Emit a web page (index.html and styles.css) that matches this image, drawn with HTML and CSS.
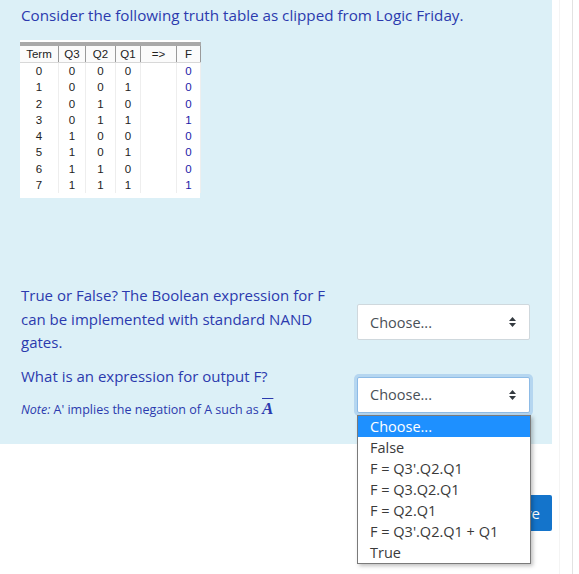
FILE: index.html
```html
<!DOCTYPE html>
<html>
<head>
    <meta charset="utf-8">
    <title>Question</title>
    <link rel="stylesheet" href="styles.css">
</head>
<body>
    <div class="page">
        <div class="main">
            <div class="formulation">
                <p class="intro">Consider the following truth table as clipped from Logic Friday.</p>
                <div class="clip">
                    <table class="tt">
                        <thead>
                            <tr>
                                <th class="c-term">Term</th>
                                <th class="c-q3">Q3</th>
                                <th class="c-q2">Q2</th>
                                <th class="c-q1">Q1</th>
                                <th class="c-arrow">=&gt;</th>
                                <th class="c-f">F</th>
                                <th class="c-pad"></th>
                            </tr>
                        </thead>
                        <tbody>
                            <tr><td>0</td><td>0</td><td>0</td><td>0</td><td></td><td class="out">0</td><td></td></tr>
                            <tr><td>1</td><td>0</td><td>0</td><td>1</td><td></td><td class="out">0</td><td></td></tr>
                            <tr><td>2</td><td>0</td><td>1</td><td>0</td><td></td><td class="out">0</td><td></td></tr>
                            <tr><td>3</td><td>0</td><td>1</td><td>1</td><td></td><td class="out">1</td><td></td></tr>
                            <tr><td>4</td><td>1</td><td>0</td><td>0</td><td></td><td class="out">0</td><td></td></tr>
                            <tr><td>5</td><td>1</td><td>0</td><td>1</td><td></td><td class="out">0</td><td></td></tr>
                            <tr><td>6</td><td>1</td><td>1</td><td>0</td><td></td><td class="out">0</td><td></td></tr>
                            <tr><td>7</td><td>1</td><td>1</td><td>1</td><td></td><td class="out">1</td><td></td></tr>
                        </tbody>
                    </table>
                </div>

                <div class="subq first">
                    <div class="qtext">
                        <p>True or False? The Boolean expression for F can be implemented with standard NAND gates.</p>
                    </div>
                    <div class="select-wrap">
                        <div class="select">
                            <span>Choose...</span>
                            <svg class="arrows" width="7" height="10" viewBox="0 0 7 10"><path d="M0 4 L3.5 0 L7 4 Z M0 6 L3.5 10 L7 6 Z" fill="#343a40"/></svg>
                        </div>
                    </div>
                </div>

                <div class="subq second">
                    <div class="qtext">
                        <p>What is an expression for output F?</p>
                        <p class="note"><em>Note:</em> A' implies the negation of A such as <span class="math">A</span></p>
                    </div>
                    <div class="select-wrap">
                        <div class="select focused">
                            <span>Choose...</span>
                            <svg class="arrows" width="7" height="10" viewBox="0 0 7 10"><path d="M0 4 L3.5 0 L7 4 Z M0 6 L3.5 10 L7 6 Z" fill="#343a40"/></svg>
                        </div>
                        <ul class="options">
                            <li class="active">Choose...</li>
                            <li>False</li>
                            <li>F = Q3'.Q2.Q1</li>
                            <li>F = Q3.Q2.Q1</li>
                            <li>F = Q2.Q1</li>
                            <li>F = Q3'.Q2.Q1 + Q1</li>
                            <li>True</li>
                        </ul>
                    </div>
                </div>
            </div>
            <div class="actions">
                <button class="btn" type="submit">Save</button>
            </div>
        </div>
        <div class="gutter">
            <div class="gutter-line"></div>
        </div>
    </div>
</body>
</html>
```

FILE: styles.css
```css
body {
    margin: 0;
    font-family: "Open Sans", "Noto Sans", sans-serif;
    background-color: #fff;
}

.page {
    display: flex;
    min-height: 574px;
}

.main {
    width: 552px;
}

.formulation {
    background-color: #dcf0f7;
    color: #2b3aae;
    padding: 4px 22px 24px 21px;
}

.intro {
    margin: 0;
    font-size: 15.2px;
    line-height: 22px;
}

/* screenshot of the Logic Friday table */
.clip {
    width: 180px;
    margin-top: 14px;
    background-color: #fff;
    padding-top: 2px;
    padding-bottom: 5px;
    margin-left: -1px;
}

.tt {
    border-collapse: collapse;
    font-family: "Liberation Sans", Arial, sans-serif;
    font-size: 11.5px;
    color: #222;
    table-layout: fixed;
    width: 180px;
    border-top: 4px solid #a9a9a9;
}

.tt th {
    font-weight: normal;
    height: 16px;
    padding: 0;
    text-align: center;
    border-right: 1px solid #9a9a9a;
    border-bottom: 1px solid #d8d8d8;
    background-color: #fbfbfb;
}

.tt th.c-pad {
    border-right: none;
    background-color: #fff;
}

.tt td {
    height: 16.25px;
    padding: 0;
    text-align: center;
    border-right: 1px solid #eeeeee;
}

.tt td:last-child {
    border-right: none;
}

.tt td.out {
    color: #1c1ca8;
}

.c-term { width: 38px; }
.c-q3 { width: 26px; }
.c-q2 { width: 29px; }
.c-q1 { width: 24px; }
.c-arrow { width: 35px; }
.c-f { width: 23px; }

.subq {
    display: flex;
    align-items: flex-start;
}

.subq.first {
    margin-top: 86px;
}

.subq.first .select-wrap {
    margin-top: 20px;
}

.subq.second {
    margin-top: 10px;
}

.subq.second .select-wrap {
    margin-top: 12px;
}

.qtext {
    width: 326px;
    font-size: 15px;
    line-height: 23.5px;
}

.qtext p {
    margin: 0;
}

.qtext .note {
    margin-top: 11px;
    font-size: 12.5px;
    line-height: 20px;
}

.math {
    font-family: "Liberation Serif", "Times New Roman", serif;
    font-style: italic;
    font-weight: bold;
    font-size: 17px;
    text-decoration: overline;
    text-decoration-thickness: 1px;
}

.select-wrap {
    position: relative;
    margin-left: auto;
}

.select {
    width: 173px;
    height: 36px;
    box-sizing: border-box;
    display: flex;
    align-items: center;
    justify-content: space-between;
    padding: 0 13px 0 12px;
    background-color: #fff;
    border: 1px solid #cfd8dd;
    border-radius: 2px;
    color: #495057;
    font-size: 14.5px;
}

.select.focused {
    border-color: #8dbbe6;
    box-shadow: 0 0 0 3px #b5d6f0;
}

.options {
    position: absolute;
    top: 38px;
    left: 0;
    z-index: 10;
    width: 174px;
    box-sizing: border-box;
    margin: 0;
    padding: 0;
    list-style: none;
    background-color: #fff;
    border: 1px solid #7a7a7a;
    box-shadow: 2px 2px 4px rgba(0, 0, 0, 0.25);
    font-size: 14.5px;
    color: #3a3a3a;
}

.options li {
    height: 21px;
    line-height: 21px;
    padding-left: 12px;
}

.options li.active {
    background-color: #1e90ff;
    color: #fff;
}

.actions {
    display: flex;
    justify-content: flex-end;
    margin-top: 51px;
}

.btn {
    height: 36px;
    padding: 0 12px;
    border: none;
    border-radius: 2px;
    background-color: #1474cb;
    color: #fff;
    font-family: "Open Sans", sans-serif;
    font-size: 15px;
}

.gutter {
    padding-left: 7px;
}

.gutter-line {
    width: 12px;
    height: 100%;
    border-left: 1px solid #f4f4f4;
    border-right: 1px solid #e2e2e2;
}
```
